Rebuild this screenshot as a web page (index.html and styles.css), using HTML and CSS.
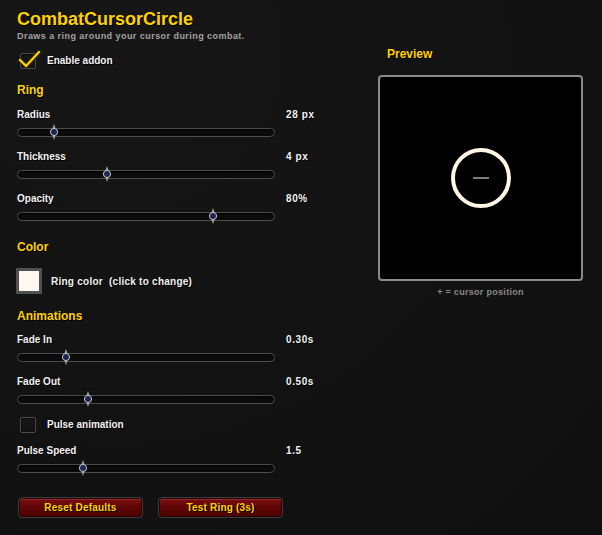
FILE: index.html
```html
<!DOCTYPE html>
<html>
<head>
<meta charset="utf-8">
<link rel="stylesheet" href="styles.css">
</head>
<body>
<div class="page">
  <div class="left">
    <h1 class="title">CombatCursorCircle</h1>
    <p class="subtitle">Draws a ring around your cursor during combat.</p>
    <div class="check-row check-enable">
      <span class="checkbox">
        <svg class="checkmark" width="24" height="20" viewBox="0 0 24 20">
          <path d="M1 9 L7 15 L20 1" fill="none" stroke="#3a2a00" stroke-width="4" stroke-linecap="round" stroke-linejoin="round"/>
          <path d="M1 9 L7 15 L20 1" fill="none" stroke="#ffd100" stroke-width="2.2" stroke-linecap="round" stroke-linejoin="round"/>
        </svg>
      </span>
      <span class="check-label">Enable addon</span>
    </div>

    <h2 class="section section-ring">Ring</h2>
    <div class="slider">
      <div class="slider-head"><span>Radius</span><span class="value">28 px</span></div>
      <div class="track"><span class="thumb" style="left:14%"><svg width="9" height="16" viewBox="0 0 9 16"><path d="M4.5 0 L6 4 L3 4 Z M4.5 16 L6 12 L3 12 Z" fill="#9a9a9a"/><circle cx="4.5" cy="8" r="3.6" fill="#1d2752" stroke="#c8c8c8" stroke-width="1"/></svg></span></div>
    </div>
    <div class="slider">
      <div class="slider-head"><span>Thickness</span><span class="value">4 px</span></div>
      <div class="track"><span class="thumb" style="left:34.9%"><svg width="9" height="16" viewBox="0 0 9 16"><path d="M4.5 0 L6 4 L3 4 Z M4.5 16 L6 12 L3 12 Z" fill="#9a9a9a"/><circle cx="4.5" cy="8" r="3.6" fill="#1d2752" stroke="#c8c8c8" stroke-width="1"/></svg></span></div>
    </div>
    <div class="slider">
      <div class="slider-head"><span>Opacity</span><span class="value">80%</span></div>
      <div class="track"><span class="thumb" style="left:76%"><svg width="9" height="16" viewBox="0 0 9 16"><path d="M4.5 0 L6 4 L3 4 Z M4.5 16 L6 12 L3 12 Z" fill="#9a9a9a"/><circle cx="4.5" cy="8" r="3.6" fill="#1d2752" stroke="#c8c8c8" stroke-width="1"/></svg></span></div>
    </div>

    <h2 class="section section-color">Color</h2>
    <div class="color-row">
      <span class="swatch"></span>
      <span class="color-label">Ring color  (click to change)</span>
    </div>

    <h2 class="section section-anim">Animations</h2>
    <div class="slider">
      <div class="slider-head"><span>Fade In</span><span class="value">0.30s</span></div>
      <div class="track"><span class="thumb" style="left:18.6%"><svg width="9" height="16" viewBox="0 0 9 16"><path d="M4.5 0 L6 4 L3 4 Z M4.5 16 L6 12 L3 12 Z" fill="#9a9a9a"/><circle cx="4.5" cy="8" r="3.6" fill="#1d2752" stroke="#c8c8c8" stroke-width="1"/></svg></span></div>
    </div>
    <div class="slider">
      <div class="slider-head"><span>Fade Out</span><span class="value">0.50s</span></div>
      <div class="track"><span class="thumb" style="left:27.5%"><svg width="9" height="16" viewBox="0 0 9 16"><path d="M4.5 0 L6 4 L3 4 Z M4.5 16 L6 12 L3 12 Z" fill="#9a9a9a"/><circle cx="4.5" cy="8" r="3.6" fill="#1d2752" stroke="#c8c8c8" stroke-width="1"/></svg></span></div>
    </div>
    <div class="check-row">
      <span class="checkbox"></span>
      <span class="check-label">Pulse animation</span>
    </div>
    <div class="slider slider-pulse">
      <div class="slider-head"><span>Pulse Speed</span><span class="value">1.5</span></div>
      <div class="track"><span class="thumb" style="left:25.2%"><svg width="9" height="16" viewBox="0 0 9 16"><path d="M4.5 0 L6 4 L3 4 Z M4.5 16 L6 12 L3 12 Z" fill="#9a9a9a"/><circle cx="4.5" cy="8" r="3.6" fill="#1d2752" stroke="#c8c8c8" stroke-width="1"/></svg></span></div>
    </div>

    <div class="buttons">
      <button class="btn">Reset Defaults</button>
      <button class="btn">Test Ring (3s)</button>
    </div>
  </div>

  <div class="right">
    <h2 class="section section-preview">Preview</h2>
    <div class="preview-box">
      <div class="ring"><span class="cursor-dash"></span></div>
    </div>
    <p class="hint">+ = cursor position</p>
  </div>
</div>
</body>
</html>
```

FILE: styles.css
```css
* { box-sizing: border-box; }

html, body {
  margin: 0;
  padding: 0;
  background: #121212;
}

body {
  font-family: "Liberation Sans", Arial, sans-serif;
  color: #f2f2f2;
  width: 602px;
  height: 535px;
  overflow: hidden;
  background: radial-gradient(ellipse at 20% 10%, #161616 0%, #121212 60%, #101010 100%);
}

.page {
  display: flex;
  padding-top: 9px;
}

.left {
  width: 317px;
  padding-left: 17px;
  display: flex;
  flex-direction: column;
}

.title {
  margin: 0;
  font-size: 18px;
  line-height: 20px;
  font-weight: bold;
  color: #ffd100;
  text-shadow: 1px 1px 0 #000;
}

.subtitle {
  margin: 1px 0 0;
  font-size: 9px;
  line-height: 12px;
  font-weight: bold;
  color: #a3a3a3;
  letter-spacing: 0.45px;
}

.check-row {
  display: flex;
  align-items: center;
  height: 16px;
}

.check-enable { margin-top: 11px; }

.checkbox {
  position: relative;
  width: 16px;
  height: 16px;
  margin-left: 3px;
  border: 1px solid #4a4a4a;
  border-radius: 2px;
  background: #151515;
  box-shadow: inset 0 0 2px #000;
}

.checkmark {
  position: absolute;
  left: -2px;
  top: -3px;
  overflow: visible;
}

.check-label {
  margin-left: 11px;
  font-size: 10px;
  font-weight: bold;
  line-height: 14px;
  text-shadow: 1px 1px 0 #000;
}

.section {
  margin: 0;
  font-size: 12px;
  line-height: 16px;
  font-weight: bold;
  color: #ffd100;
  text-shadow: 1px 1px 0 #000;
}

.section-ring { margin: 13px 0 10px; }
.section-color { margin: 5px 0 13px; }
.section-anim { margin: 14px 0 9px; }

.slider {
  display: flex;
  flex-direction: column;
  margin-bottom: 13px;
}

.slider-head {
  display: grid;
  grid-template-columns: 269px auto;
  height: 14px;
  font-size: 10px;
  line-height: 14px;
  font-weight: bold;
  text-shadow: 1px 1px 0 #000;
}

.value {
  letter-spacing: 0.6px;
}

.track {
  position: relative;
  width: 258px;
  height: 9px;
  margin-top: 6px;
  border: 1px solid #4d4d4d;
  border-radius: 5px;
  background: #0b0b0b;
  box-shadow: inset 0 1px 2px #000;
}

.thumb {
  position: absolute;
  top: -5px;
  transform: translateX(-50%);
  width: 9px;
  height: 16px;
  display: block;
}

.thumb svg { display: block; }

.check-row + .slider-pulse { margin-top: 11px; }

.color-row {
  display: flex;
  align-items: center;
  height: 26px;
}

.swatch {
  width: 26px;
  height: 26px;
  margin-left: -1px;
  border: 3px solid #505050;
  background: #fff8ec;
}

.color-label {
  margin-left: 9px;
  font-size: 10px;
  font-weight: bold;
  white-space: pre;
  letter-spacing: 0.25px;
  text-shadow: 1px 1px 0 #000;
}

.buttons {
  display: flex;
  gap: 15px;
  margin-top: 0;
  margin-left: 1px;
}

.slider-pulse { margin-bottom: 24px; }

.btn {
  width: 125px;
  height: 21px;
  padding: 0;
  border: 1px solid #3c3c3c;
  border-radius: 4px;
  background: linear-gradient(#801010 0%, #620606 45%, #4a0000 100%);
  box-shadow: inset 0 0 0 1px #2a0000, inset 0 1px 0 1px #8c2a2a;
  color: #ffd100;
  font-family: "Liberation Sans", Arial, sans-serif;
  font-size: 10px;
  font-weight: bold;
  letter-spacing: 0.2px;
  text-shadow: 1px 1px 0 #000;
}

.right {
  margin-left: 61px;
  padding-top: 37px;
  display: flex;
  flex-direction: column;
  width: 205px;
}

.section-preview {
  padding-left: 9px;
  margin-bottom: 13px;
}

.preview-box {
  width: 205px;
  height: 206px;
  border: 2px solid #8a8a8a;
  border-radius: 4px;
  background: #000;
  display: flex;
  align-items: center;
  justify-content: center;
}

.ring {
  width: 60px;
  height: 60px;
  border: 4px solid #fff6e4;
  border-radius: 50%;
  display: flex;
  align-items: center;
  justify-content: center;
}

.cursor-dash {
  width: 16px;
  height: 2px;
  background: #7c7c7c;
}

.hint {
  margin: 5px 0 0;
  text-align: center;
  font-size: 9px;
  line-height: 12px;
  font-weight: bold;
  color: #8a8a8a;
  letter-spacing: 0.3px;
}
```
